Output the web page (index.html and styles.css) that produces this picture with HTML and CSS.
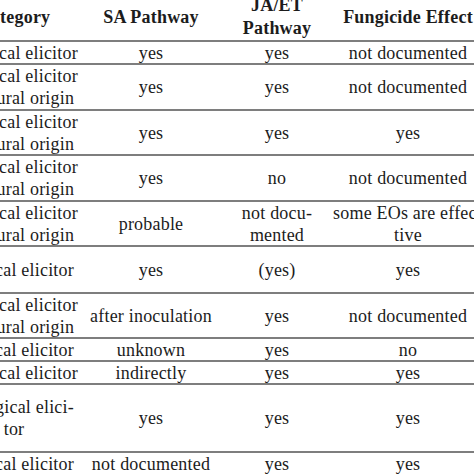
FILE: index.html
```html
<!DOCTYPE html>
<html lang="en">
  <head>
    <meta charset="UTF-8" />
    <meta name="viewport" content="width=device-width, initial-scale=1.0" />
    <title>Elicitor Pathways</title>
    <link rel="stylesheet" href="styles.css">
  </head>
  <body>
    <main class="sheet">
      <div class="pathways">
        <div class="cell head">Category</div>
        <div class="cell head">SA Pathway</div>
        <div class="cell head">JA/ET<br>Pathway</div>
        <div class="cell head">Fungicide Effect</div>

        <div class="cell">Chemical elicitor</div>
        <div class="cell">yes</div>
        <div class="cell">yes</div>
        <div class="cell">not documented</div>

        <div class="cell">Chemical elicitor<br>of natural origin</div>
        <div class="cell">yes</div>
        <div class="cell">yes</div>
        <div class="cell">not documented</div>

        <div class="cell">Chemical elicitor<br>of natural origin</div>
        <div class="cell">yes</div>
        <div class="cell">yes</div>
        <div class="cell">yes</div>

        <div class="cell">Chemical elicitor<br>of natural origin</div>
        <div class="cell">yes</div>
        <div class="cell">no</div>
        <div class="cell">not documented</div>

        <div class="cell">Chemical elicitor<br>of natural origin</div>
        <div class="cell">probable</div>
        <div class="cell">not docu-<br>mented</div>
        <div class="cell">some EOs are effec-<br>tive</div>

        <div class="cell">Physical elicitor</div>
        <div class="cell">yes</div>
        <div class="cell">(yes)</div>
        <div class="cell">yes</div>

        <div class="cell">Chemical elicitor<br>of natural origin</div>
        <div class="cell">after inoculation</div>
        <div class="cell">yes</div>
        <div class="cell">not documented</div>

        <div class="cell">Physical elicitor</div>
        <div class="cell">unknown</div>
        <div class="cell">yes</div>
        <div class="cell">no</div>

        <div class="cell">Chemical elicitor</div>
        <div class="cell">indirectly</div>
        <div class="cell">yes</div>
        <div class="cell">yes</div>

        <div class="cell">Biological elici-<br>tor</div>
        <div class="cell">yes</div>
        <div class="cell">yes</div>
        <div class="cell">yes</div>

        <div class="cell">Physical elicitor</div>
        <div class="cell">not documented</div>
        <div class="cell">yes</div>
        <div class="cell">yes</div>
      </div>
    </main>
  </body>
</html>
```

FILE: styles.css
```css
html,
body {
  margin: 0;
  padding: 0;
  background-color: #fff;
}

body {
  width: 474px;
  height: 474px;
  overflow: hidden;
  font-family: "Liberation Serif", "Times New Roman", serif;
  font-size: 18px;
  letter-spacing: 0.2px;
  color: #1c1c1c;
}

.sheet {
  margin: -6px 0 0 -58px;
}

.pathways {
  display: grid;
  grid-template-columns: 144px 130px 122px 140px;
  grid-template-rows: 46px 23px 46px 45px 46px 45px 47px 45px 23px 23px 68px 23px;
}

.cell {
  box-sizing: border-box;
  display: flex;
  align-items: center;
  justify-content: center;
  text-align: center;
  white-space: nowrap;
  line-height: 22px;
  border-top: 2px solid #7e7e7e;
}

.head {
  border-top: none;
  font-weight: bold;
  line-height: 23px;
}
```
